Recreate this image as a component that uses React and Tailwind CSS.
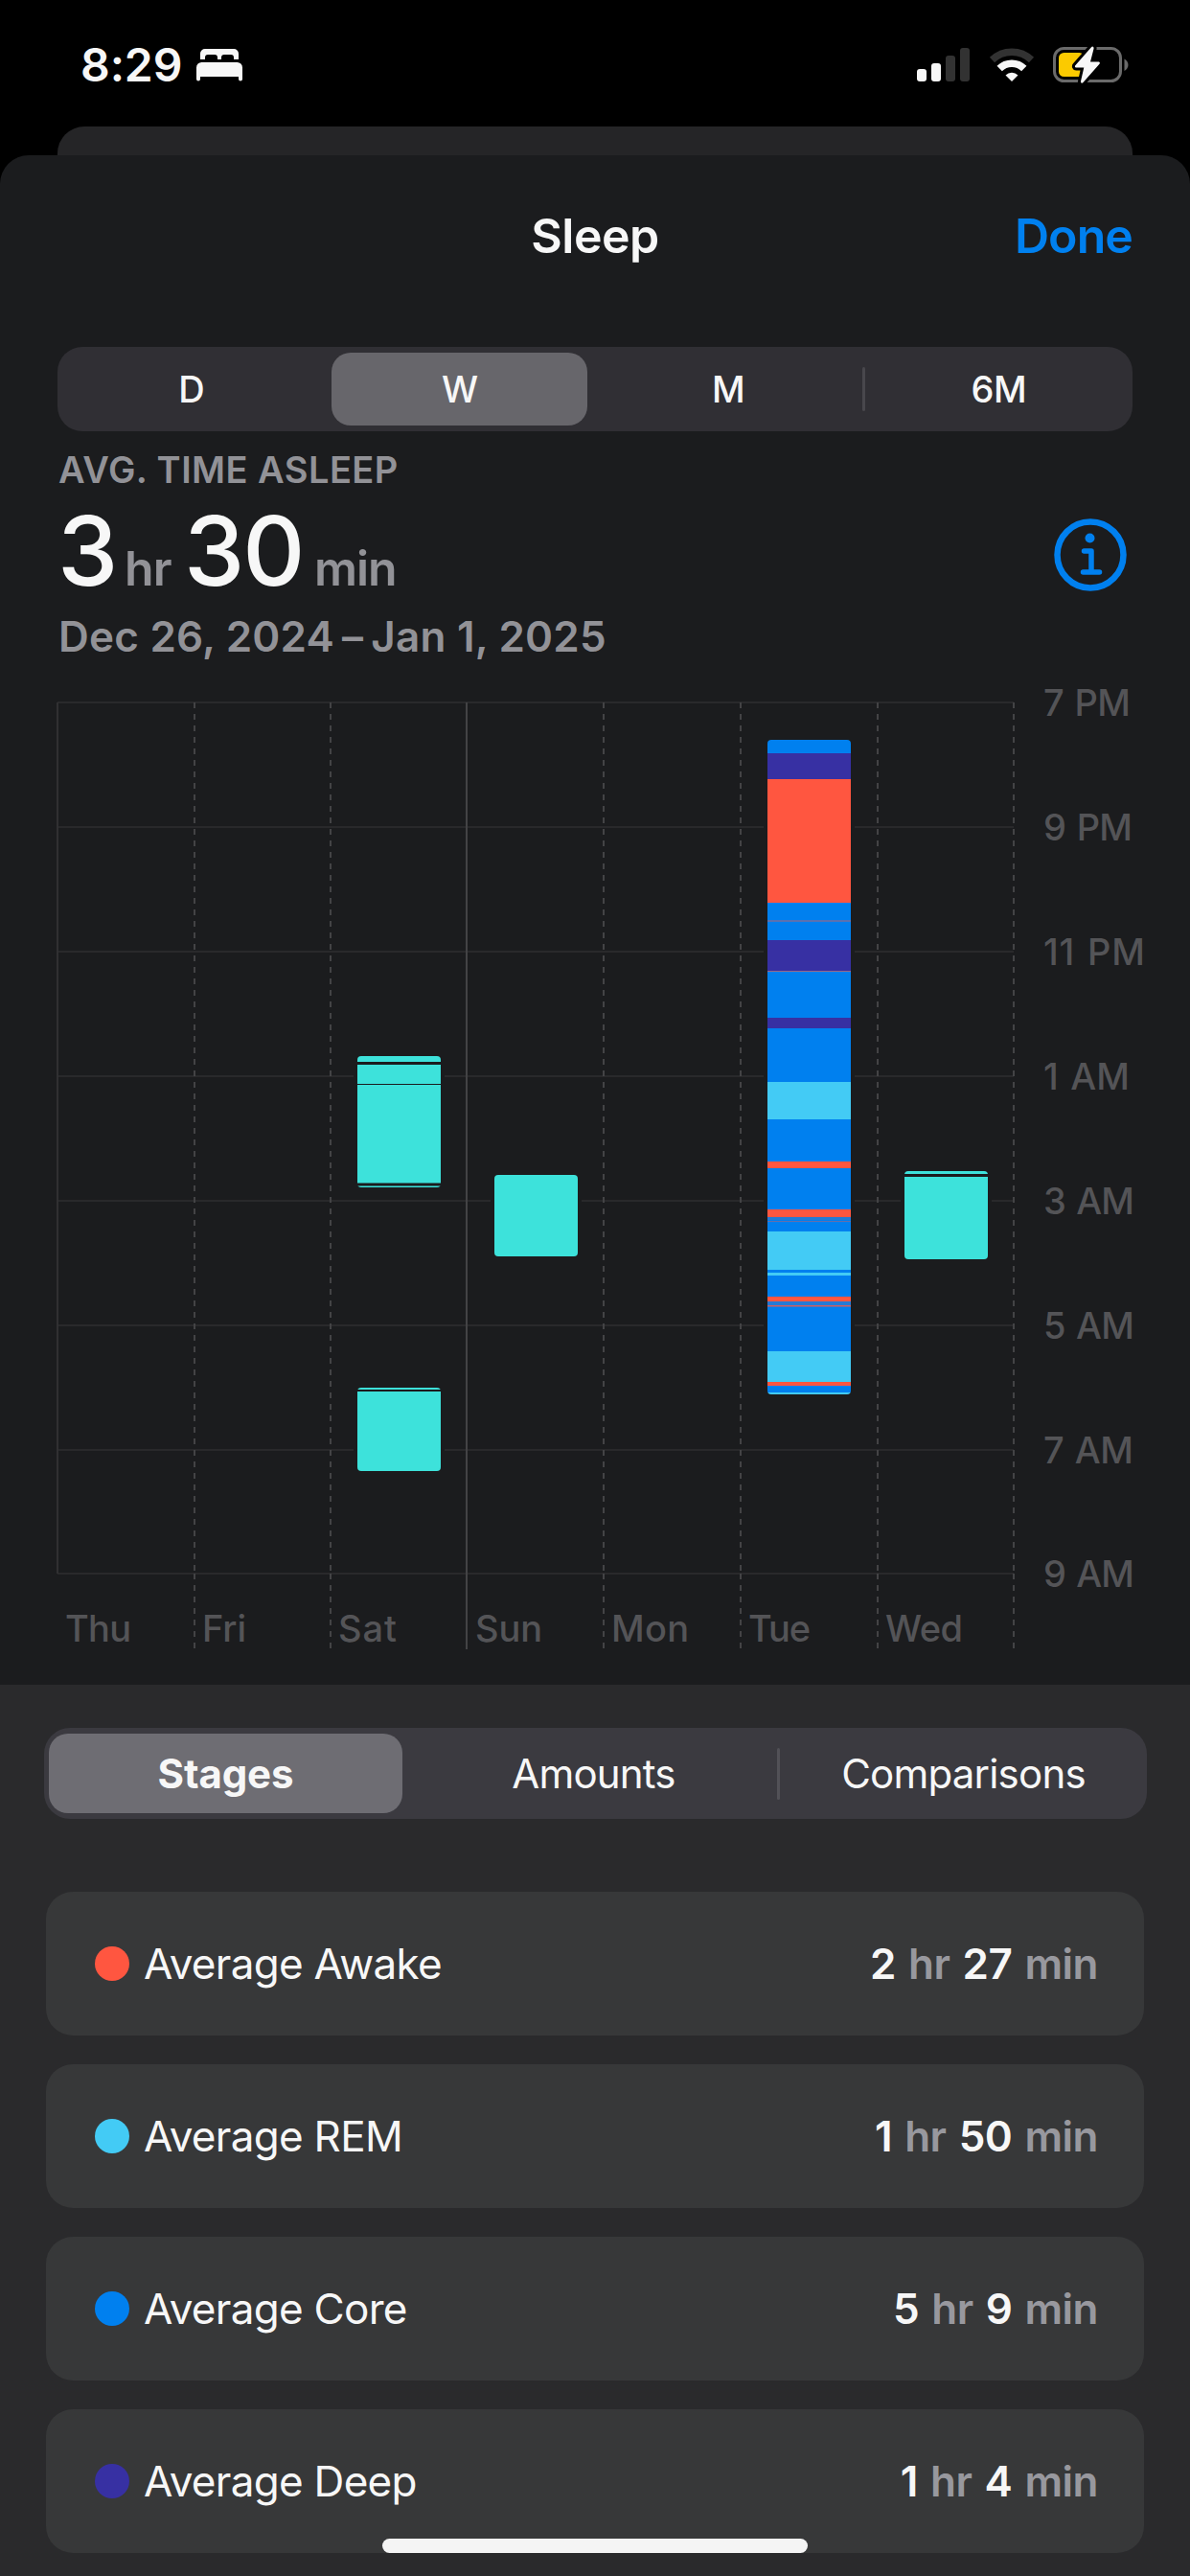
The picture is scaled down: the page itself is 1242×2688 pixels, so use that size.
import React, { useState } from "react";

const COLORS = {
  awake: "#ff5640",
  rem: "#43cbf5",
  core: "#0080ef",
  deep: "#3730a3",
  asleep: "#3de2db",
};

const RANGES = ["D", "W", "M", "6M"];
const TABS = ["Stages", "Amounts", "Comparisons"];
const DAYS = ["Thu", "Fri", "Sat", "Sun", "Mon", "Tue", "Wed"];

const HOURS = [
  { label: "7 PM", width: 91 },
  { label: "9 PM", width: 93 },
  { label: "11 PM", width: 106 },
  { label: "1 AM", width: 90 },
  { label: "3 AM", width: 95 },
  { label: "5 AM", width: 95 },
  { label: "7 AM", width: 94 },
  { label: "9 AM", width: 95 },
];

const DAY_WIDTHS = [69, 46, 61, 70, 81, 65, 81];

// every session is a list of [stage, from, to], measured from the 7 PM line (65 per hour)
const SESSIONS = [
  {
    day: 2,
    parts: [
      ["asleep", 369, 375],
      ["asleep", 378, 398],
      ["asleep", 399, 501.5],
      ["asleep", 504.5, 506],
    ],
  },
  {
    day: 2,
    parts: [
      ["asleep", 715, 717],
      ["asleep", 719, 802],
    ],
  },
  { day: 3, parts: [["asleep", 493, 578]] },
  {
    day: 5,
    parts: [
      ["core", 39, 53],
      ["deep", 53, 80],
      ["awake", 80, 209],
      ["core", 209, 248],
      ["deep", 248, 280],
      ["core", 280, 329],
      ["deep", 329, 340],
      ["core", 340, 396],
      ["rem", 396, 435],
      ["core", 435, 479],
      ["awake", 479, 486],
      ["core", 486, 529],
      ["awake", 529, 537],
      ["core", 537, 552],
      ["rem", 552, 592],
      ["core", 592, 595],
      ["rem", 595, 598],
      ["core", 598, 620],
      ["awake", 620, 625],
      ["core", 625, 677],
      ["rem", 677, 709],
      ["awake", 709, 713],
      ["core", 713, 720],
      ["rem", 720, 722],
    ],
    // very short wake ups, drawn see-through over the stages
    blips: [
      [227, 2, 0.35],
      [280, 1, 0.6],
      [537, 3, 0.15],
      [541, 1, 0.4],
      [625, 4, 0.15],
      [629, 1.5, 0.8],
    ],
  },
  {
    day: 6,
    parts: [
      ["asleep", 489, 492],
      ["asleep", 495, 581],
    ],
  },
];

const STAGES = [
  { name: "Average Awake", hr: 2, min: 27, dot: "bg-[#ff5640]" },
  { name: "Average REM", hr: 1, min: 50, dot: "bg-[#43cbf5]" },
  { name: "Average Core", hr: 5, min: 9, dot: "bg-[#0080ef]" },
  { name: "Average Deep", hr: 1, min: 4, dot: "bg-[#3730a3]" },
];

function BedIcon() {
  return (
    <svg width="48" height="34" viewBox="0 0 48 34" fill="#f7f7f7">
      <path d="M4 11V5a5 5 0 0 1 5-5h30a5 5 0 0 1 5 5v6h-5V9a3 3 0 0 0-3-3h-7a3 3 0 0 0-3 3v2h-4V9a3 3 0 0 0-3-3h-7a3 3 0 0 0-3 3v2z" />
      <path d="M0 19.500a5.500 5.500 0 0 1 5.500-5.500h37a5.500 5.500 0 0 1 5.500 5.500V31.500a2 2 0 0 1-4 0V29H4v2.500a2 2 0 0 1-4 0z" />
    </svg>
  );
}

function SignalIcon() {
  return (
    <svg width="56" height="36" viewBox="0 0 56 36">
      <rect x="0" y="22" width="10" height="13" rx="3" fill="#f7f7f7" />
      <rect x="15" y="16" width="10" height="19" rx="3" fill="#f7f7f7" />
      <rect x="30" y="8" width="10" height="27" rx="3" fill="#323232" />
      <rect x="45" y="0" width="10" height="35" rx="3" fill="#323232" />
    </svg>
  );
}

function WifiIcon() {
  return (
    <svg width="48" height="36" viewBox="0 0 48 36" fill="none">
      <path d="M3.500 12.500a29.500 29.500 0 0 1 41 0" stroke="#323232" strokeWidth="7.500" />
      <path d="M11.200 21.500a18 18 0 0 1 25.600 0" stroke="#f7f7f7" strokeWidth="7.500" />
      <path d="M24 35l-6.500-6.600a9.300 9.300 0 0 1 13 0z" fill="#f7f7f7" />
    </svg>
  );
}

function BatteryIcon() {
  return (
    <svg width="80" height="40" viewBox="0 0 80 40">
      <rect x="1.500" y="2.500" width="69" height="34" rx="10" fill="none" stroke="#6a6a6a" strokeWidth="3" />
      <path d="M74.500 13.500c5.300 2.500 5.300 10 0 12.500z" fill="#6a6a6a" />
      <rect x="6" y="7" width="27" height="25" rx="5.500" fill="#fbca00" />
      <path
        d="M40 1.200L23.300 20.300c-.8.900-.3 2.200 1 2.200h8L29 36.800c-.4 1.800 1.300 2.500 2.500 1.200L48.500 18.800c.8-.9.300-2.300-1-2.300H39L42.500 3c.4-2-1.200-3.200-2.500-1.800z"
        fill="#f7f7f7"
        stroke="#000"
        strokeWidth="6"
        paintOrder="stroke"
      />
    </svg>
  );
}

function InfoIcon() {
  return (
    <svg width="76" height="76" viewBox="0 0 76 76" fill="none" stroke="#0080ef">
      <circle cx="38" cy="38" r="34.500" strokeWidth="6.500" />
      <circle cx="37.500" cy="20.500" r="5" fill="#0080ef" stroke="none" />
      <path d="M31.500 34h7.500v21.500M30.500 56h17" strokeWidth="5.500" strokeLinecap="round" strokeLinejoin="round" />
    </svg>
  );
}

function StatusBar() {
  return (
    <div className="flex h-[132px] items-center justify-between pl-[84px] pr-[63px] pt-1">
      <div className="flex items-center gap-[15px]">
        <span className="w-[106px] text-[48px] font-semibold leading-none tracking-[-0.100px] text-[#f7f7f7]">
          8:29
        </span>
        <BedIcon />
      </div>
      <div className="flex items-center gap-[19px]">
        <SignalIcon />
        <WifiIcon />
        <BatteryIcon />
      </div>
    </div>
  );
}

function SleepChart() {
  const top = 26;
  const left = 60;
  const dayWidth = 142.6;
  const rowY = (i) => top + (i === 7 ? 909 : i * 130);
  const colX = (i) => Math.round(left + i * dayWidth);

  return (
    <svg width="1242" height="1051" viewBox="0 0 1242 1051" className="block">
      {/* Grid */}
      {HOURS.map((h, i) => (
        <line key={h.label} x1="60" x2="1058" y1={rowY(i)} y2={rowY(i)} stroke="#29292b" strokeWidth="2" />
      ))}
      <line x1="60" x2="60" y1={rowY(0)} y2={rowY(7)} stroke="#303032" strokeWidth="2" />
      {[1, 2, 4, 5, 6, 7].map((i) => (
        <g key={i} stroke="#434345" strokeWidth="2" strokeDasharray="6 6">
          <line x1={colX(i)} x2={colX(i)} y1={rowY(0)} y2={rowY(7)} />
          <line x1={colX(i)} x2={colX(i)} y1={rowY(7)} y2="1013" />
        </g>
      ))}
      <line x1="487" x2="487" y1={rowY(0)} y2="1014" stroke="#434345" strokeWidth="2" />

      {/* Sessions */}
      {SESSIONS.map((session, i) => {
        const x = Math.round(left + session.day * dayWidth + 28);
        const from = session.parts[0][1];
        const to = session.parts[session.parts.length - 1][2];
        return (
          <g key={i}>
            <rect x={x - 4} y={top + from - 4} width="95" height={to - from + 8} fill="#1b1c1e" />
            <clipPath id={`session-${i}`}>
              <rect x={x} y={top + from} width="87" height={to - from} rx="4" />
            </clipPath>
            <g clipPath={`url(#session-${i})`}>
              {session.parts.map(([stage, a, b]) => (
                <rect key={a} x={x} y={top + a} width="87" height={b - a} fill={COLORS[stage]} />
              ))}
              {(session.blips || []).map(([y, height, opacity]) => (
                <rect key={y} x={x} y={top + y} width="87" height={height} fill={COLORS.awake} opacity={opacity} />
              ))}
            </g>
          </g>
        );
      })}

      {/* Labels */}
      <g className="text-[38px] font-medium [word-spacing:2px]" fill="#545457">
        {HOURS.map((h, i) => (
          <text key={h.label} x="1089" y={rowY(i) + 14} textLength={h.width}>
            {h.label}
          </text>
        ))}
        {DAYS.map((day, i) => (
          <text key={day} x={colX(i) + 8} y="1006" textLength={DAY_WIDTHS[i]}>
            {day}
          </text>
        ))}
      </g>
    </svg>
  );
}

export default function App() {
  const [range, setRange] = useState("W");
  const [tab, setTab] = useState("Stages");

  return (
    <div className="flex h-[2688px] w-[1242px] flex-col overflow-hidden bg-black font-['Inter','Liberation_Sans',sans-serif]">
      <StatusBar />

      {/* Sheet underneath */}
      <div className="mx-[60px] h-[30px] rounded-t-[28px] bg-[#252527]" />

      <div className="flex flex-1 flex-col rounded-t-[30px] bg-[#1b1c1e]">
        <div className="grid h-[168px] grid-cols-3 items-center px-[60px]">
          <span />
          <h1 className="text-center text-[50px] font-semibold leading-none tracking-[-0.500px] text-[#f7f7f7]">
            Sleep
          </h1>
          <button className="text-right text-[50px] font-semibold leading-none tracking-[-0.900px] text-[#0080ef]">
            Done
          </button>
        </div>

        {/* Range picker */}
        <div className="mx-[60px] mt-8 flex h-[88px] items-center rounded-[26px] bg-[#302f34] py-1.5">
          {RANGES.map((r) => (
            <React.Fragment key={r}>
              {r === "6M" && <div className="h-[46px] w-[3px] rounded bg-[#48474c]" />}
              <button
                onClick={() => setRange(r)}
                className={`h-full rounded-[20px] text-[38px] font-medium leading-none tracking-[-0.500px] text-[#f7f7f7] ${
                  range === r ? "mx-[7px] w-[267px] bg-[#67666b]" : "flex-1"
                }`}
              >
                {r}
              </button>
            </React.Fragment>
          ))}
        </div>

        {/* Summary */}
        <div className="flex items-center justify-between pl-[61px] pr-[66px] pt-5">
          <div className="text-[#929297]">
            <p className="text-[38px] font-semibold leading-[40px] tracking-[0.450px]">AVG. TIME ASLEEP</p>
            <div className="-ml-px mt-[14px] flex h-[101px] items-baseline text-[50px] font-semibold leading-[100px]">
              <span className="w-[70px] text-[101px] font-medium text-[#f7f7f7]">3</span>
              <span className="w-[62px] tracking-[-0.800px]">hr</span>
              <span className="w-[136px] text-[101px] font-medium tracking-[-2px] text-[#f7f7f7]">30</span>
              <span className="tracking-[-1px]">min</span>
            </div>
            <p className="mt-4 text-[44px] font-semibold leading-[46px] tracking-[0.220px]">
              Dec 26, 2024<span className="mx-2">–</span>Jan 1, 2025
            </p>
          </div>
          <InfoIcon />
        </div>

        <div className="mt-5">
          <SleepChart />
        </div>

        {/* Details */}
        <div className="flex flex-1 flex-col bg-[#2a2a2c] px-12 pt-[45px]">
          <div className="-ml-0.5 -mr-[3px] flex h-[95px] items-center rounded-[27px] bg-[#3b3a40] py-1.5 pl-[5px]">
            {TABS.map((t) => (
              <React.Fragment key={t}>
                {t === "Comparisons" && <div className="h-[54px] w-[3px] rounded bg-[#525157]" />}
                <button
                  onClick={() => setTab(t)}
                  className={`h-full rounded-[20px] pt-px leading-none text-[#f7f7f7] ${
                    t === "Stages" ? "mr-2 w-[369px]" : "flex-1"
                  } ${
                    tab === t
                      ? "bg-[#6e6d73] text-[42px] font-bold tracking-[-0.100px]"
                      : "text-[42px] font-normal tracking-[-0.800px]"
                  }`}
                >
                  {t}
                </button>
              </React.Fragment>
            ))}
          </div>

          <div className="mt-[76px] flex flex-col gap-[30px]">
            {STAGES.map((s) => (
              <div
                key={s.name}
                className="flex h-[150px] items-center justify-between rounded-[28px] bg-[#373839] pl-[51px] pr-[48px] text-[44px] leading-none"
              >
                <div className="flex items-center gap-[15px]">
                  <span className={`size-9 rounded-full ${s.dot}`} />
                  <span className="tracking-[-0.700px] text-[#f7f7f7]">{s.name}</span>
                </div>
                <div className="font-semibold tracking-[-0.500px] text-[#98989e] [word-spacing:2.5px]">
                  <span className="text-[#f7f7f7]">{s.hr}</span> hr{" "}
                  <span className="text-[#f7f7f7]">{s.min}</span> min
                </div>
              </div>
            ))}
          </div>

          {/* Home indicator */}
          <div className="relative z-10 mx-auto -mt-[15px] h-[15px] w-[444px] rounded-full bg-[#f4f4f4]" />
        </div>
      </div>
    </div>
  );
}
